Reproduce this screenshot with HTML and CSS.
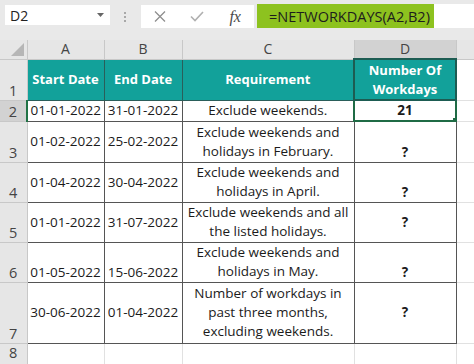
FILE: index.html
```html
<!DOCTYPE html>
<html lang="en">
<head>
    <meta charset="UTF-8">
    <meta name="viewport" content="width=device-width, initial-scale=1.0">
    <title>NETWORKDAYS</title>
    <link rel="stylesheet" href="styles.css">
</head>
<body>
    <div class="formula-bar">
        <div class="name-box">
            <span>D2</span>
            <svg class="caret" width="7" height="4" viewBox="0 0 7 4"><path d="M0 0 L7 0 L3.5 4 Z" fill="#666"/></svg>
        </div>
        <div class="grip"><i></i><i></i><i></i></div>
        <div class="fx-tools">
            <svg width="12" height="11" viewBox="0 0 12 11"><path d="M1 0.5 L11 10.5 M11 0.5 L1 10.5" stroke="#8e8e8e" stroke-width="1.3" fill="none"/></svg>
            <svg width="14" height="11" viewBox="0 0 14 11"><path d="M1 5.5 L5 9.5 L13 1" stroke="#b0b0b0" stroke-width="1.6" fill="none"/></svg>
            <span class="fx">fx</span>
        </div>
        <div class="formula-input">
            <div class="formula">=NETWORKDAYS(A2,B2)</div>
        </div>
    </div>

    <table class="sheet">
        <colgroup>
            <col class="c-rowhead">
            <col class="c-a">
            <col class="c-b">
            <col class="c-c">
            <col class="c-d">
            <col class="c-rest">
        </colgroup>
        <tr class="col-heads">
            <th class="corner"><span class="tri"></span></th>
            <th>A</th>
            <th>B</th>
            <th>C</th>
            <th class="active">D</th>
            <th class="blank"></th>
        </tr>
        <tr class="r1">
            <th class="rh">1</th>
            <td class="hd">Start Date</td>
            <td class="hd">End Date</td>
            <td class="hd">Requirement</td>
            <td class="hd hd-d">Number Of<br>Workdays</td>
            <td class="out"></td>
        </tr>
        <tr class="r2">
            <th class="rh active">2</th>
            <td>01-01-2022</td>
            <td>31-01-2022</td>
            <td>Exclude weekends.</td>
            <td class="sel num">21<span class="handle"></span></td>
            <td class="out"></td>
        </tr>
        <tr class="r3">
            <th class="rh">3</th>
            <td>01-02-2022</td>
            <td>25-02-2022</td>
            <td>Exclude weekends and<br>holidays in February.</td>
            <td class="num bottom">?</td>
            <td class="out"></td>
        </tr>
        <tr class="r4">
            <th class="rh">4</th>
            <td>01-04-2022</td>
            <td>30-04-2022</td>
            <td>Exclude weekends and<br>holidays in April.</td>
            <td class="num bottom">?</td>
            <td class="out"></td>
        </tr>
        <tr class="r5">
            <th class="rh">5</th>
            <td>01-01-2022</td>
            <td>31-07-2022</td>
            <td>Exclude weekends and all<br>the listed holidays.</td>
            <td class="num">?</td>
            <td class="out"></td>
        </tr>
        <tr class="r6">
            <th class="rh">6</th>
            <td class="bottom">01-05-2022</td>
            <td class="bottom">15-06-2022</td>
            <td>Exclude weekends and<br>holidays in May.</td>
            <td class="num bottom">?</td>
            <td class="out"></td>
        </tr>
        <tr class="r7">
            <th class="rh">7</th>
            <td>30-06-2022</td>
            <td>01-04-2022</td>
            <td>Number of workdays in<br>past three months,<br>excluding weekends.</td>
            <td class="num">?</td>
            <td class="out"></td>
        </tr>
        <tr class="r8">
            <th class="rh">8</th>
            <td class="empty"></td>
            <td class="empty"></td>
            <td class="empty"></td>
            <td class="empty"></td>
            <td class="out"></td>
        </tr>
    </table>
</body>
</html>
```

FILE: styles.css
```css
body {
    margin: 0;
    width: 474px;
    height: 364px;
    overflow: hidden;
    background-color: #fff;
    font-family: "Open Sans", "Liberation Sans", sans-serif;
    color: #1b1b1b;
}

/* formula bar */
.formula-bar {
    height: 40px;
    box-sizing: border-box;
    padding-top: 4px;
    padding-left: 5px;
    display: flex;
    align-items: flex-start;
    background-color: #e9e9e9;
}
.name-box {
    width: 105px;
    height: 20px;
    margin-top: 1px;
    box-sizing: border-box;
    padding: 0 6px 0 5px;
    display: flex;
    align-items: center;
    justify-content: space-between;
    background-color: #fff;
    font-size: 14px;
    color: #222;
}
.grip {
    width: 3px;
    margin: 8px 14px 0 14px;
    display: flex;
    flex-direction: column;
    gap: 2px;
}
.grip i {
    display: block;
    width: 2px;
    height: 2px;
    background-color: #a8a8a8;
}
.fx-tools {
    width: 113px;
    height: 23px;
    margin-top: 1px;
    display: grid;
    grid-template-columns: repeat(3, 1fr);
    align-items: center;
    justify-items: center;
    background-color: #fff;
}
.fx {
    font-family: "Liberation Serif", serif;
    font-style: italic;
    font-size: 16px;
    color: #4a4a4a;
}
.formula-input {
    flex: 1;
    height: 24px;
    margin-left: 3px;
    background-color: #fff;
}
.formula {
    width: 177px;
    height: 24px;
    box-sizing: border-box;
    padding-left: 12px;
    display: flex;
    align-items: center;
    background-color: #8dc21f;
    font-size: 14.5px;
    color: #1d1d1d;
}

/* sheet */
.sheet {
    border-collapse: collapse;
    table-layout: fixed;
    width: 474px;
    font-size: 13.5px;
}
.c-rowhead { width: 27px; }
.c-a { width: 77px; }
.c-b { width: 78px; }
.c-c { width: 172px; }
.c-d { width: 102px; }
.c-rest { width: 18px; }

.sheet td,
.sheet th {
    padding: 0 2px;
    white-space: nowrap;
    overflow: hidden;
}
.sheet td {
    border: 1px solid #555;
    text-align: center;
    vertical-align: middle;
    line-height: 19px;
}

.col-heads th {
    height: 18px;
    background-color: #e6e6e6;
    border-right: 1px solid #c8c8c8;
    border-bottom: 1px solid #c8c8c8;
    font-weight: normal;
    font-size: 14px;
    line-height: 18px;
    color: #444;
    text-align: center;
}
.col-heads th.active {
    background-color: #d2d2d2;
}
.col-heads th.blank {
    border-right: none;
}
.corner {
    position: relative;
}
.tri {
    position: absolute;
    right: 3px;
    bottom: 3px;
    width: 0;
    height: 0;
    border-left: 13px solid transparent;
    border-bottom: 13px solid #b6b6b6;
}

.sheet .rh {
    background-color: #e6e6e6;
    border-bottom: 1px solid #c8c8c8;
    border-right: 1px solid #c8c8c8;
    font-weight: normal;
    font-size: 14.5px;
    color: #444;
    text-align: center;
    vertical-align: bottom;
    line-height: 18px;
}
.sheet .rh.active {
    background-color: #d2d2d2;
    border-right: 2px solid #217346;
}
.sheet .r8 .rh {
    vertical-align: top;
    border-bottom: none;
}

.r1 { height: 41px; }
.r2 { height: 20px; }
.r3 { height: 41px; }
.r4 { height: 40px; }
.r5 { height: 40px; }
.r6 { height: 40px; }
.r7 { height: 61px; }
.r8 { height: 22px; }

.sheet td.hd {
    background-color: #12a19a;
    color: #fff;
    font-weight: bold;
    font-size: 13px;
    border-color: #2a5e5a;
}
.sheet td.hd-d {
    border: 2px solid #1d5c52;
}
.sheet td.num {
    font-weight: bold;
}
.sheet td.bottom {
    vertical-align: bottom;
}
.sheet td.sel {
    position: relative;
    border: 2px solid #1f6b45;
}
.handle {
    position: absolute;
    right: -3px;
    bottom: -3px;
    width: 4px;
    height: 4px;
    background-color: #1f6b45;
    border: 1px solid #fff;
}
.sheet td.out {
    border: none;
    border-bottom: 1px solid #e1e1e1;
}
.sheet td.empty {
    border: none;
    border-right: 1px solid #e1e1e1;
}
```
